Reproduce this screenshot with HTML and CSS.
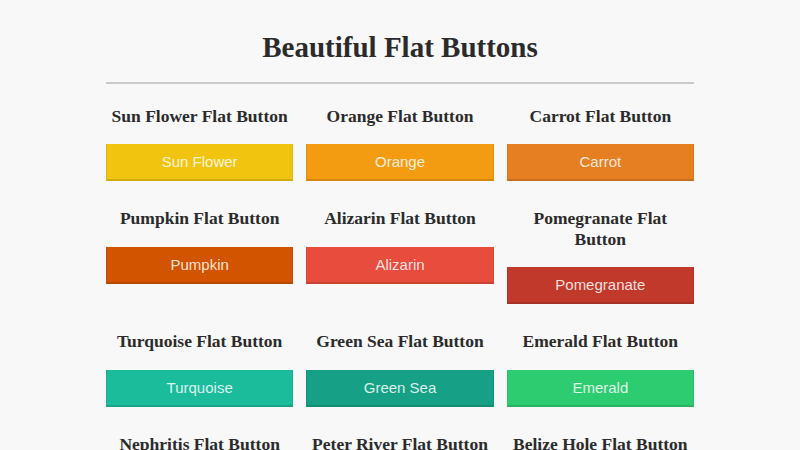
FILE: index.html
```html
<!DOCTYPE html>
<html>
<head>
	<title>Beautiful Flat Buttons</title>
<link rel="stylesheet" href="styles.css">
</head>
<body>
	<div class="wrap">
		<h1 class="title">Beautiful Flat Buttons</h1>
		<hr class="rule">
		<div class="grid">
			<div class="cell">
				<h3>Sun Flower Flat Button</h3>
				<button class="flat sunflower">Sun Flower</button>
			</div>
			<div class="cell">
				<h3>Orange Flat Button</h3>
				<button class="flat orange">Orange</button>
			</div>
			<div class="cell">
				<h3>Carrot Flat Button</h3>
				<button class="flat carrot">Carrot</button>
			</div>
			<div class="cell">
				<h3>Pumpkin Flat Button</h3>
				<button class="flat pumpkin">Pumpkin</button>
			</div>
			<div class="cell">
				<h3>Alizarin Flat Button</h3>
				<button class="flat alizarin">Alizarin</button>
			</div>
			<div class="cell">
				<h3>Pomegranate Flat Button</h3>
				<button class="flat pomegranate">Pomegranate</button>
			</div>
			<div class="cell">
				<h3>Turquoise Flat Button</h3>
				<button class="flat turquoise">Turquoise</button>
			</div>
			<div class="cell">
				<h3>Green Sea Flat Button</h3>
				<button class="flat greensea">Green Sea</button>
			</div>
			<div class="cell">
				<h3>Emerald Flat Button</h3>
				<button class="flat emerald">Emerald</button>
			</div>
			<div class="cell">
				<h3>Nephritis Flat Button</h3>
				<button class="flat nephritis">Nephritis</button>
			</div>
			<div class="cell">
				<h3>Peter River Flat Button</h3>
				<button class="flat peterriver">Peter River</button>
			</div>
			<div class="cell">
				<h3>Belize Hole Flat Button</h3>
				<button class="flat belizehole">Belize Hole</button>
			</div>
			<div class="cell">
				<h3>Amethyst Flat Button</h3>
				<button class="flat amethyst">Amethyst</button>
			</div>
			<div class="cell">
				<h3>Wisteria Flat Button</h3>
				<button class="flat wisteria">Wisteria</button>
			</div>
			<div class="cell">
				<h3>Wet Asphalt Flat Button</h3>
				<button class="flat wetasphalt">Wet Asphalt</button>
			</div>
		</div>
	</div>
</body>
</html>
```

FILE: styles.css
```css
body {
	margin: 0;
	background: #f8f8f8;
	color: #2b2b2b;
	font-family: "Liberation Serif", "Times New Roman", serif;
}

.wrap {
	width: 588px;
	margin: 0 auto;
	padding-top: 29px;
}

.title {
	margin: 0;
	font-size: 29px;
	line-height: 36px;
	text-align: center;
}

.rule {
	margin: 17px 0 0;
	border: none;
	border-top: 2px solid #cacaca;
	height: 0;
}

.grid {
	display: grid;
	grid-template-columns: repeat(3, 1fr);
	column-gap: 13px;
	row-gap: 27px;
	padding-top: 21.5px;
}

.cell {
	display: flex;
	flex-direction: column;
}

.cell h3 {
	margin: 0 0 18px;
	font-size: 17.5px;
	line-height: 20.5px;
	text-align: center;
}

/* flat buttons */
.flat {
	display: block;
	width: 100%;
	height: 37px;
	padding: 0;
	border: 1px solid rgba(0, 0, 0, 0.06);
	border-top: none;
	border-bottom: 2px solid rgba(0, 0, 0, 0.12);
	border-radius: 0;
	color: rgba(255, 255, 255, 0.85);
	font: 15px "Liberation Sans", Arial, sans-serif;
	text-align: center;
	cursor: pointer;
	outline: none;
}

.flat:hover { opacity: 0.9; }

.sunflower { background: #f1c40f; }
.orange { background: #f39c12; }
.carrot { background: #e67e22; }
.pumpkin { background: #d35400; }
.alizarin { background: #e74c3c; }
.pomegranate { background: #c0392b; }
.turquoise { background: #1abc9c; }
.greensea { background: #16a085; }
.emerald { background: #2ecc71; }
.nephritis { background: #27ae60; }
.peterriver { background: #3498db; }
.belizehole { background: #2980b9; }
.amethyst { background: #9b59b6; }
.wisteria { background: #8e44ad; }
.wetasphalt { background: #34495e; }
```
